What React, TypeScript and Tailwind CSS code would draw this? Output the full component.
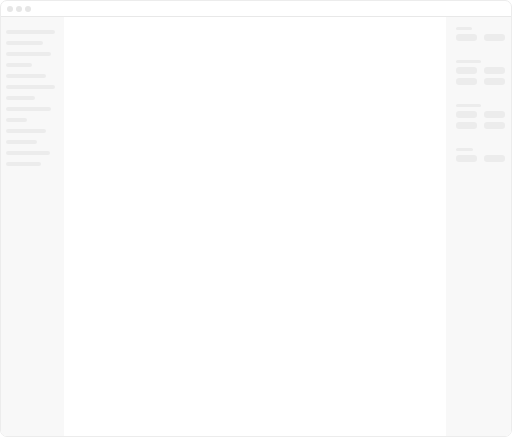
const leftLines = [49, 37, 45, 26, 40, 49, 29, 45, 21, 40, 31, 44, 35];

const rightSections = [
  { label: 16, rows: 1 },
  { label: 25, rows: 2 },
  { label: 25, rows: 2 },
  { label: 17, rows: 1 },
];

function Bar({ w }: { w: number }) {
  return <div className="h-[4px] rounded-full bg-[#ececec]" style={{ width: w }} />;
}

export default function App() {
  return (
    <div className="w-[512px] h-[437px] bg-white font-['Inter',sans-serif]">
      <div className="w-full h-full flex flex-col rounded-[7px] border border-[#ececec] overflow-hidden">
        {/* Title bar */}
        <div className="h-[16px] shrink-0 flex items-center gap-[3px] pl-[6px] border-b border-[#e8e8e8]">
          <span className="w-[6px] h-[6px] rounded-full bg-[#e6e6e6]" />
          <span className="w-[6px] h-[6px] rounded-full bg-[#e6e6e6]" />
          <span className="w-[6px] h-[6px] rounded-full bg-[#e6e6e6]" />
        </div>

        <div className="flex flex-1 min-h-0">
          {/* Left sidebar */}
          <aside className="w-[63px] shrink-0 bg-[#f8f8f8] flex flex-col gap-[7px] pl-[5px] pt-[13px]">
            {leftLines.map((w, i) => (
              <Bar key={i} w={w} />
            ))}
          </aside>

          {/* Canvas */}
          <main className="flex-1 bg-white" />

          {/* Right sidebar */}
          <aside className="w-[65px] shrink-0 bg-[#f8f8f8] flex flex-col pl-[10px] pt-[10px] gap-[19px]">
            {rightSections.map((s, i) => (
              <div key={i} className="flex flex-col">
                <div className="h-[3px] rounded-full bg-[#ececec] mb-[4px]" style={{ width: s.label }} />
                <div className="flex flex-col gap-[4px]">
                  {Array.from({ length: s.rows }).map((_, j) => (
                    <div key={j} className="flex gap-[7px]">
                      <div className="w-[21px] h-[7px] rounded-[3px] bg-[#ececec]" />
                      <div className="w-[21px] h-[7px] rounded-[3px] bg-[#ececec]" />
                    </div>
                  ))}
                </div>
              </div>
            ))}
          </aside>
        </div>
      </div>
    </div>
  );
}
